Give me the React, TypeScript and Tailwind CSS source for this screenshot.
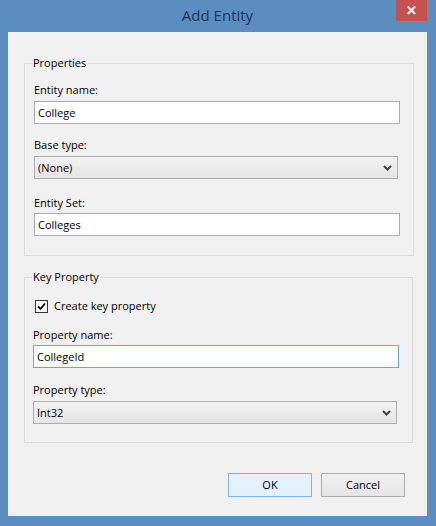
import React from "react";

const font = { fontFamily: '"Segoe UI", "Open Sans", "Noto Sans", sans-serif' };

function Chevron() {
  return (
    <svg width="9" height="6" viewBox="0 0 9 6" className="block">
      <path d="M1 1 L4.5 4.5 L8 1" fill="none" stroke="#404040" strokeWidth="2" />
    </svg>
  );
}

function TextBox({ value, focused }: { value: string; focused?: boolean }) {
  return (
    <div
      className={
        "h-[23px] bg-white border flex items-center pl-[3px] text-[11px] text-black leading-none " +
        (focused ? "border-[#69a6e0]" : "border-[#abadb3]")
      }
    >
      {value}
    </div>
  );
}

function Select({ value }: { value: string }) {
  return (
    <div className="h-[23px] mr-[2px] border border-[#acacac] bg-gradient-to-b from-[#f2f2f2] to-[#e5e5e5] flex items-center justify-between pl-[3px] pr-[5px] text-[11px] text-black leading-none">
      <span>{value}</span>
      <Chevron />
    </div>
  );
}

function Label({ children, className }: { children: React.ReactNode; className?: string }) {
  return <div className={"h-[16px] leading-[16px] text-[11px] text-black " + (className ?? "")}>{children}</div>;
}

export default function App() {
  return (
    <div style={font} className="w-[436px] h-[526px] bg-[#5b8dc0] flex flex-col pl-[8px] pr-[9px] pb-[10px]">
      {/* title bar */}
      <div className="h-[32px] flex items-start shrink-0">
        <div className="flex-1 h-[32px] flex items-center justify-center pl-[31px] pb-[2px] text-[15px] text-[#1b3656]">
          Add Entity
        </div>
        <div className="w-[31px] h-[21px] bg-[#c75050] flex items-center justify-center text-white text-[13px] font-bold leading-none">
          ✕
        </div>
      </div>
      {/* client */}
      <div className="flex-1 bg-[#f0f0f0] pl-[16px] pr-[13px] pt-[23px] flex flex-col">
        <fieldset className="border border-[#dcdcdc] pl-[9px] pr-[13px] pb-[19px]">
          <legend className="ml-[-2px] px-[1px] h-[16px] leading-[16px] text-[11px] text-black">Properties</legend>
          <Label className="mt-[11px]">Entity name:</Label>
          <div className="mt-[3px]">
            <TextBox value="College" />
          </div>
          <Label className="mt-[13px]">Base type:</Label>
          <div className="mt-[3px]">
            <Select value="(None)" />
          </div>
          <Label className="mt-[16px]">Entity Set:</Label>
          <div className="mt-[2px]">
            <TextBox value="Colleges" />
          </div>
        </fieldset>
        <fieldset className="mt-[13px] mr-[1px] border border-[#dcdcdc] pl-[8px] pr-[13px] pb-[18px]">
          <legend className="ml-[-1px] px-[1px] h-[16px] leading-[16px] text-[11px] text-black">Key Property</legend>
          <div className="mt-[13px] h-[16px] flex items-center pl-[2px] gap-[6px]">
            <div className="w-[13px] h-[13px] border border-[#333333] bg-white flex items-center justify-center">
              <svg width="9" height="9" viewBox="0 0 9 9" className="block">
                <path d="M1 4.5 L3.5 7 L8 1.5" fill="none" stroke="#000" strokeWidth="1.8" />
              </svg>
            </div>
            <span className="text-[11px] text-black leading-[16px]">Create key property</span>
          </div>
          <Label className="mt-[13px]">Property name:</Label>
          <div className="mt-[2px]">
            <TextBox value="CollegeId" focused />
          </div>
          <Label className="mt-[14px]">Property type:</Label>
          <div className="mt-[3px]">
            <Select value="Int32" />
          </div>
        </fieldset>
        <div className="mt-[30px] flex justify-end gap-[9px] pr-[9px]">
          <div className="w-[84px] h-[24px] border border-[#7eb4ea] bg-[#e5f1fb] flex items-center justify-center text-[11px] text-black">
            OK
          </div>
          <div className="w-[84px] h-[24px] border border-[#adadad] bg-gradient-to-b from-[#f0f0f0] to-[#e5e5e5] flex items-center justify-center text-[11px] text-black">
            Cancel
          </div>
        </div>
      </div>
    </div>
  );
}
